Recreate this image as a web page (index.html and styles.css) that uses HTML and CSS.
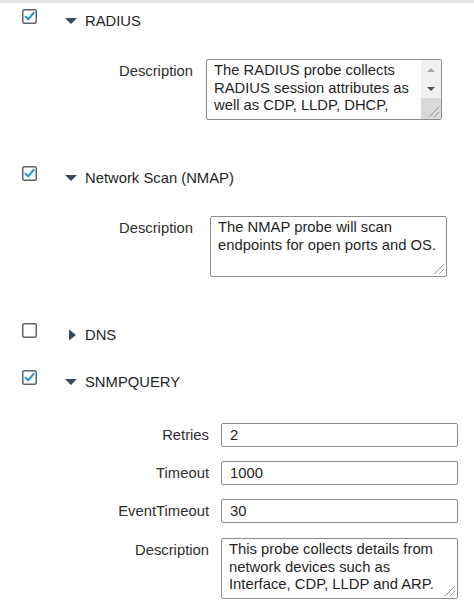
FILE: index.html
```html
<!DOCTYPE html>
<html lang="en">
<head>
<meta charset="utf-8">
<title>Probes</title>
<link rel="stylesheet" href="styles.css">
</head>
<body>
<div class="topbar"></div>
<div class="probes">

  <section class="probe">
    <div class="probe-head">
      <svg class="cb" viewBox="0 0 15 15"><rect x="0.75" y="0.75" width="13.5" height="13.5" rx="1.5" class="cb-box"/><polyline points="3.5,7.6 6.2,10.3 11.6,3.8" class="cb-check"/></svg>
      <svg class="toggle" viewBox="0 0 16 24"><polygon points="2,9 14,9 8,15"/></svg>
      <span class="probe-name">RADIUS</span>
    </div>
    <div class="probe-body form-radius">
      <div class="field-label">Description</div>
      <div class="textbox">
        <div class="textbox-text">The RADIUS probe collects RADIUS session attributes as well as CDP, LLDP, DHCP,</div>
        <div class="scrollbar">
          <div class="sb-btn"><span class="arrow-up"></span></div>
          <div class="sb-btn"><span class="arrow-down"></span></div>
          <div class="sb-corner"></div>
        </div>
        <svg class="grip" viewBox="0 0 12 12"><line x1="11" y1="1" x2="1" y2="11"/><line x1="11" y1="6" x2="6" y2="11"/></svg>
      </div>
    </div>
  </section>

  <section class="probe">
    <div class="probe-head">
      <svg class="cb" viewBox="0 0 15 15"><rect x="0.75" y="0.75" width="13.5" height="13.5" rx="1.5" class="cb-box"/><polyline points="3.5,7.6 6.2,10.3 11.6,3.8" class="cb-check"/></svg>
      <svg class="toggle" viewBox="0 0 16 24"><polygon points="2,9 14,9 8,15"/></svg>
      <span class="probe-name">Network Scan (NMAP)</span>
    </div>
    <div class="probe-body form-nmap">
      <div class="field-label">Description</div>
      <div class="textbox">
        <div class="textbox-text">The NMAP probe will scan endpoints for open ports and OS.</div>
        <svg class="grip" viewBox="0 0 12 12"><line x1="11" y1="1" x2="1" y2="11"/><line x1="11" y1="6" x2="6" y2="11"/></svg>
      </div>
    </div>
  </section>

  <section class="probe">
    <div class="probe-head">
      <svg class="cb" viewBox="0 0 15 15"><rect x="0.75" y="0.75" width="13.5" height="13.5" rx="1.5" class="cb-box"/></svg>
      <svg class="toggle" viewBox="0 0 16 24"><polygon points="6,6.5 13,12 6,17.5"/></svg>
      <span class="probe-name">DNS</span>
    </div>
  </section>

  <section class="probe">
    <div class="probe-head">
      <svg class="cb" viewBox="0 0 15 15"><rect x="0.75" y="0.75" width="13.5" height="13.5" rx="1.5" class="cb-box"/><polyline points="3.5,7.6 6.2,10.3 11.6,3.8" class="cb-check"/></svg>
      <svg class="toggle" viewBox="0 0 16 24"><polygon points="2,9 14,9 8,15"/></svg>
      <span class="probe-name">SNMPQUERY</span>
    </div>
    <div class="probe-body form-snmp">
      <div class="field-label">Retries</div>
      <div class="input">2</div>
      <div class="field-label">Timeout</div>
      <div class="input">1000</div>
      <div class="field-label">EventTimeout</div>
      <div class="input">30</div>
      <div class="field-label desc-label">Description</div>
      <div class="textbox desc-box">
        <div class="textbox-text">This probe collects details from network devices such as Interface, CDP, LLDP and ARP.</div>
        <svg class="grip" viewBox="0 0 12 12"><line x1="11" y1="1" x2="1" y2="11"/><line x1="11" y1="6" x2="6" y2="11"/></svg>
      </div>
    </div>
  </section>

</div>
</body>
</html>
```

FILE: styles.css
```css
html, body {
  margin: 0;
  background: #ffffff;
}

body {
  font-family: "Liberation Sans", Arial, sans-serif;
  font-size: 14.8px;
  color: #1f1f1f;
}

.topbar {
  height: 3px;
  background: #e6e6e6;
}

.probes {
  padding: 6px 0 0 22px;
}

.probe {
  padding-bottom: 23px;
}

.probe:last-child {
  padding-bottom: 0;
}

.probe-head {
  display: flex;
  align-items: flex-start;
  height: 24px;
}

.cb {
  width: 15px;
  height: 15px;
  display: block;
  flex: none;
}

.cb-box {
  fill: #ffffff;
  stroke: #5c656e;
  stroke-width: 1.5;
}

.cb-check {
  fill: none;
  stroke: #1f8fd4;
  stroke-width: 2;
  stroke-linecap: round;
  stroke-linejoin: round;
}

.toggle {
  width: 16px;
  height: 24px;
  display: block;
  flex: none;
  margin-left: 26px;
  fill: #3b4858;
}

.probe-name {
  margin-left: 6px;
  line-height: 24px;
  color: #1f1f1f;
}

.probe-body {
  display: grid;
  grid-template-columns: 171px 237px;
  column-gap: 17px;
  row-gap: 14px;
  align-items: start;
  margin: 26px 0 23px;
}

.probe:last-child .probe-body {
  margin-bottom: 0;
}

.form-radius {
  grid-template-columns: 171px 236px;
  column-gap: 13px;
}

.form-nmap {
  column-gap: 17px;
}

.form-snmp {
  grid-template-columns: 187px 237px;
  column-gap: 12px;
  margin-top: 29px;
}

.field-label {
  text-align: right;
  line-height: 24px;
  color: #2e2e2e;
  white-space: nowrap;
}

.desc-label,
.desc-box {
  margin-top: 1px;
}

.input {
  height: 24px;
  box-sizing: border-box;
  border: 1px solid #8c8c8c;
  border-radius: 2px;
  padding: 0 8px;
  line-height: 22px;
  background: #ffffff;
  color: #1f1f1f;
}

.textbox {
  position: relative;
  height: 61px;
  box-sizing: border-box;
  border: 1px solid #8c8c8c;
  border-radius: 2px;
  display: flex;
  overflow: hidden;
  background: #ffffff;
}

.textbox-text {
  flex: 1;
  min-width: 0;
  padding: 2px 6px 0 7px;
  line-height: 17.5px;
  overflow: hidden;
  color: #1f1f1f;
}

.scrollbar {
  width: 20px;
  flex: none;
  display: flex;
  flex-direction: column;
  background: #f1f1f1;
}

.sb-btn {
  height: 19px;
  display: flex;
  align-items: center;
  justify-content: center;
}

.arrow-up {
  width: 0;
  height: 0;
  border-left: 4.5px solid transparent;
  border-right: 4.5px solid transparent;
  border-bottom: 4px solid #a8a8a8;
}

.arrow-down {
  width: 0;
  height: 0;
  border-left: 4.5px solid transparent;
  border-right: 4.5px solid transparent;
  border-top: 4px solid #505050;
}

.sb-corner {
  flex: 1;
  background: #dadada;
}

.grip {
  position: absolute;
  right: 1px;
  bottom: 1px;
  width: 12px;
  height: 12px;
  stroke: #9a9a9a;
  stroke-width: 1;
}
```
